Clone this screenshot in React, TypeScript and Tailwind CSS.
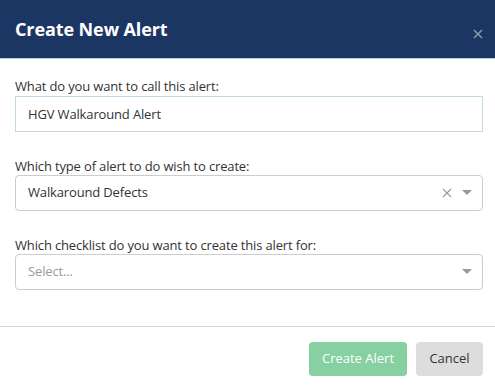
import { useState } from "react"

function Caret() {
  return (
    <svg width="10" height="6" viewBox="0 0 10 6" className="text-[#999]">
      <path d="M0 0 L10 0 L5 5 Z" fill="currentColor" />
    </svg>
  )
}

function SelectBox({ value, placeholder, clearable }: { value?: string; placeholder?: string; clearable?: boolean }) {
  return (
    <div className="flex h-[36px] items-center rounded-[4px] border border-[#cccccc] bg-white pl-[12px] pr-[10px]">
      <span className={`flex-1 text-[13px] ${value ? "text-[#333]" : "text-[#999]"}`}>{value ?? placeholder}</span>
      {clearable && (
        <svg width="10" height="10" viewBox="0 0 10 10" className="mr-[10px] text-[#999]">
          <path d="M1 1 L9 9 M9 1 L1 9" stroke="currentColor" strokeWidth="1.1" />
        </svg>
      )}
      <Caret />
    </div>
  )
}

export default function App() {
  const [name, setName] = useState("HGV Walkaround Alert")

  return (
    <div className="w-[495px] h-[391px] bg-white font-['Open_Sans',sans-serif] text-[#333]">
      <div className="flex h-[59px] items-center justify-between bg-[#1c3664] pl-[15px] pr-[12px] border-b border-[#b8cde0]">
        <h1 className="text-[18px] font-bold text-white tracking-[-0.1px]">Create New Alert</h1>
        <svg width="10" height="10" viewBox="0 0 10 10" className="mt-[10px] text-[#8895ad]">
          <path d="M1 1 L9 9 M9 1 L1 9" stroke="currentColor" strokeWidth="1.6" />
        </svg>
      </div>

      <div className="flex flex-col pl-[15px] pr-[12px] pt-[18px] pb-[36px] border-b border-[#c9d8e0] text-[13px] tracking-[-0.15px]">
        <label className="leading-[18px] mb-[1px]">What do you want to call this alert:</label>
        <input
          value={name}
          onChange={e => setName(e.target.value)}
          className="h-[36px] border border-[#c3dae2] px-[12px] text-[13px] text-[#333] outline-none tracking-[-0.15px]"
        />

        <label className="mt-[25px] leading-[18px]">Which type of alert to do wish to create:</label>
        <SelectBox value="Walkaround Defects" clearable />

        <label className="mt-[25px] leading-[18px]">Which checklist do you want to create this alert for:</label>
        <SelectBox placeholder="Select..." />
      </div>

      <div className="flex justify-end gap-[9px] px-[12px] pt-[15px]">
        <button className="h-[34px] w-[98px] rounded-[4px] bg-[#86d0a1] text-[13px] text-white">Create Alert</button>
        <button className="h-[34px] w-[67px] rounded-[4px] bg-[#dddddd] text-[13px] text-[#333]">Cancel</button>
      </div>
    </div>
  )
}
